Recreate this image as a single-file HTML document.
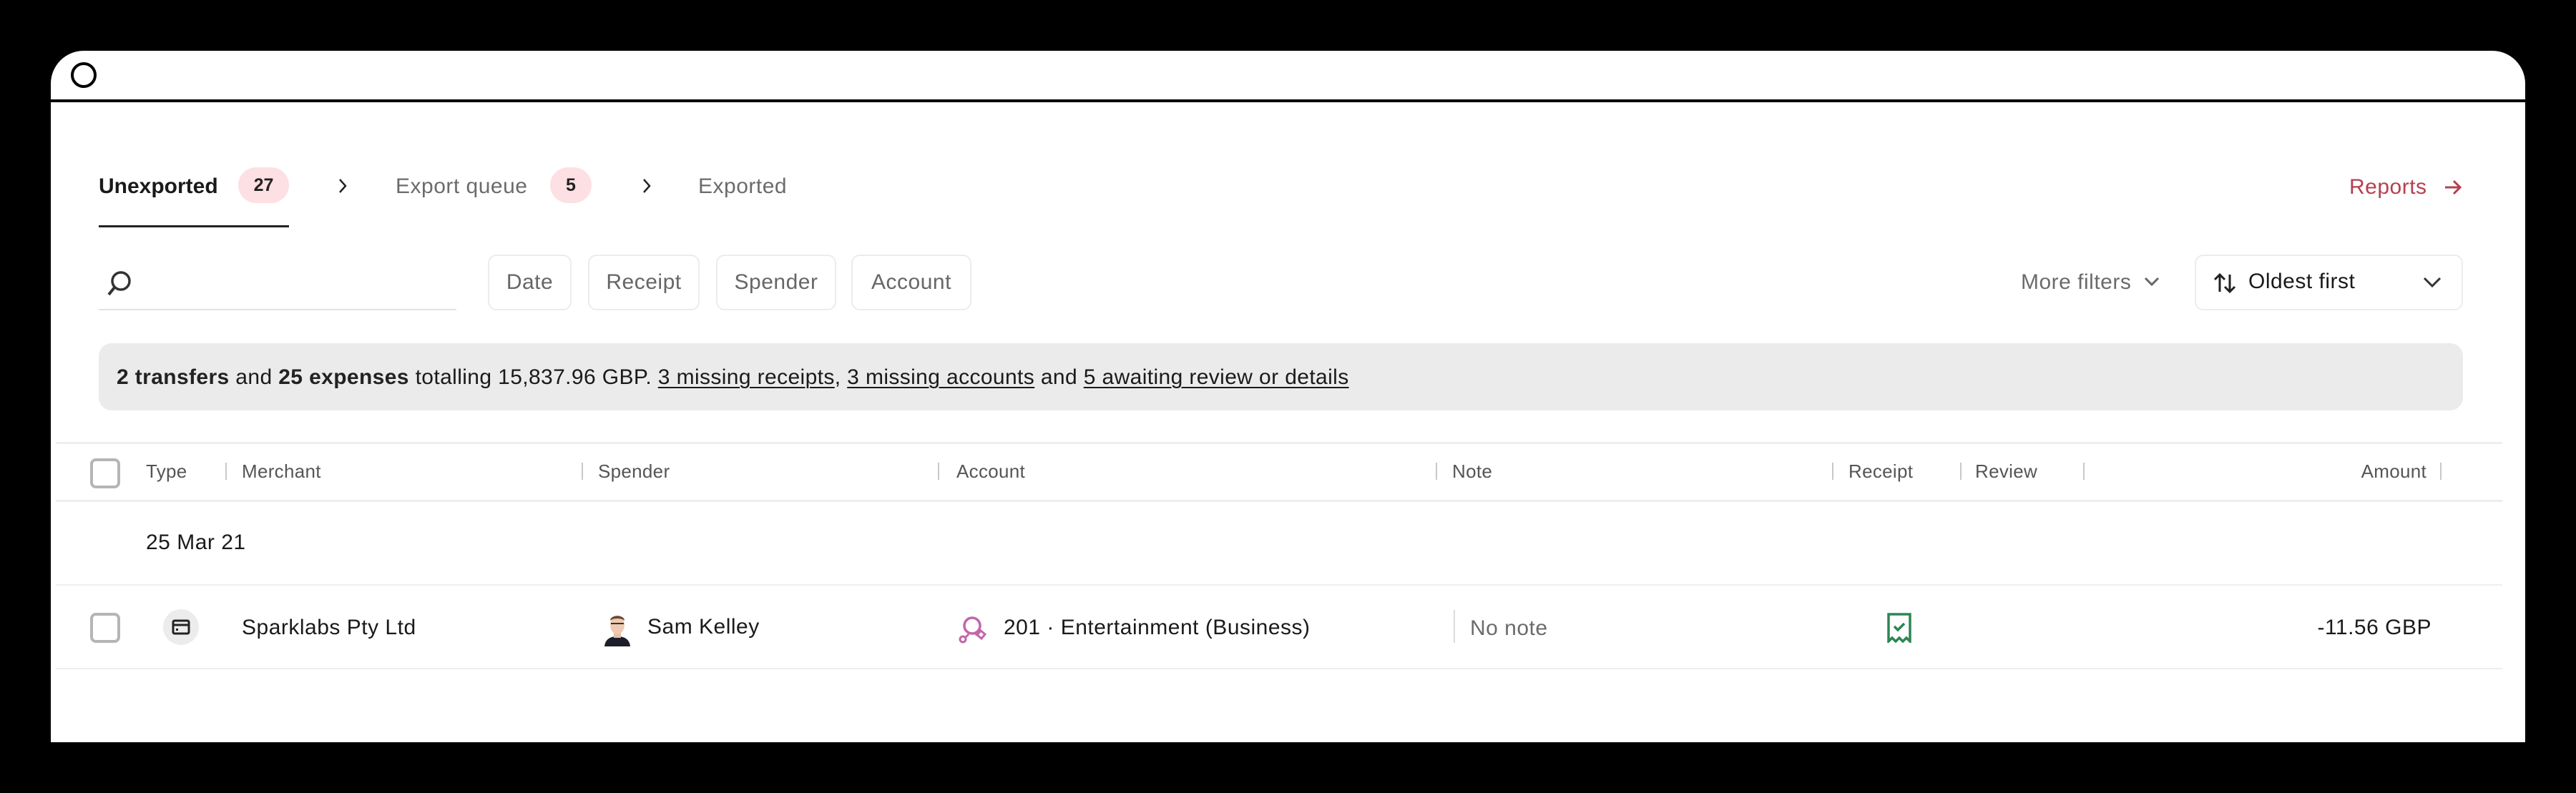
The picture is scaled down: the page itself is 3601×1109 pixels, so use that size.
<!DOCTYPE html>
<html><head><meta charset="utf-8"><style>
*{box-sizing:border-box;margin:0;padding:0}
body{width:3601px;height:1109px;background:#000;position:relative;overflow:hidden;font-family:"Liberation Sans",sans-serif;color:#1a1a1a}
.a{position:absolute;white-space:nowrap}
#panel{position:absolute;left:71px;top:71px;width:3459px;height:967px;background:#fff;border-radius:46px 46px 0 0;overflow:hidden}
.t30{font-size:30px;line-height:36px;letter-spacing:0.5px}
.g{color:#6b6b6b}
.badge{position:absolute;height:50px;border-radius:25px;background:#fde0e3;font-size:25px;line-height:50px;text-align:center;font-weight:bold;color:#222}
.fb{position:absolute;top:285px;height:78px;border:2px solid #ececec;border-radius:12px;font-size:30px;line-height:74px;text-align:center;color:#666;letter-spacing:0.5px}
.h{position:absolute;top:573px;font-size:26px;line-height:30px;color:#555;letter-spacing:0.3px}
.sep{position:absolute;top:576px;width:2px;height:24px;background:#c8c8c8}
.line{position:absolute;left:7px;width:3420px;height:3px;background:#eeeeee}
.cb{position:absolute;left:55px;width:42px;height:42px;border:4px solid #b5b5b5;border-radius:8px}
u{text-decoration:underline;text-underline-offset:4px;text-decoration-thickness:2px}
b{font-weight:bold;color:#222}
</style></head><body>
<div id="panel">
  <div class="a" style="left:28px;top:16px;width:36px;height:36px;border:4px solid #000;border-radius:50%"></div>
  <div class="a" style="left:0;top:68px;width:3459px;height:4px;background:#000"></div>

  <div class="a t30" style="left:67px;top:172px;font-weight:bold;letter-spacing:0">Unexported</div>
  <div class="badge" style="left:262px;top:163px;width:71px">27</div>
  <div class="a" style="left:67px;top:244px;width:266px;height:3px;background:#222"></div>
  <svg class="a" style="left:398px;top:176px" width="20" height="26" viewBox="0 0 20 26"><path d="M6 4l8 9-8 9" fill="none" stroke="#222" stroke-width="2.5"/></svg>
  <div class="a t30 g" style="left:482px;top:172px">Export queue</div>
  <div class="badge" style="left:698px;top:163px;width:58px">5</div>
  <svg class="a" style="left:823px;top:176px" width="20" height="26" viewBox="0 0 20 26"><path d="M6 4l8 9-8 9" fill="none" stroke="#222" stroke-width="2.5"/></svg>
  <div class="a t30 g" style="left:905px;top:172px">Exported</div>

  <div class="a t30" style="left:3213px;top:173px;color:#b5404f">Reports</div>
  <svg class="a" style="left:3343px;top:176px" width="30" height="30" viewBox="0 0 30 30"><path d="M4 15h21M16 6l9 9-9 9" fill="none" stroke="#b5404f" stroke-width="3"/></svg>

  <svg class="a" style="left:76px;top:304px" width="40" height="44" viewBox="0 0 40 44"><circle cx="22" cy="18" r="12" fill="none" stroke="#333" stroke-width="3.5"/><path d="M13 27L5 37" stroke="#333" stroke-width="4"/></svg>
  <div class="a" style="left:67px;top:361px;width:500px;height:2px;background:#e2e2e2"></div>
  <div class="fb" style="left:611px;width:117px">Date</div>
  <div class="fb" style="left:751px;width:156px">Receipt</div>
  <div class="fb" style="left:930px;width:168px">Spender</div>
  <div class="fb" style="left:1119px;width:168px">Account</div>

  <div class="a t30 g" style="left:2754px;top:306px">More filters</div>
  <svg class="a" style="left:2925px;top:313px" width="24" height="20" viewBox="0 0 24 20"><path d="M3 5l9 9 9-9" fill="none" stroke="#666" stroke-width="3"/></svg>
  <div class="a" style="left:2997px;top:285px;width:375px;height:78px;border:2px solid #ececec;border-radius:12px"></div>
  <svg class="a" style="left:3022px;top:307px" width="36" height="36" viewBox="0 0 36 36"><path d="M10 30V6M3 13l7-7 7 7M24 6v24M17 23l7 7 7-7" fill="none" stroke="#222" stroke-width="3"/></svg>
  <div class="a t30" style="left:3072px;top:305px">Oldest first</div>
  <svg class="a" style="left:3315px;top:313px" width="28" height="22" viewBox="0 0 28 22"><path d="M3 5l11 11 11-11" fill="none" stroke="#333" stroke-width="3"/></svg>

  <div class="a" style="left:67px;top:409px;width:3305px;height:94px;background:#ebebeb;border-radius:18px"></div>
  <div class="a t30" style="left:92px;top:439px;letter-spacing:0.38px"><b>2 transfers</b> and <b>25 expenses</b> totalling 15,837.96 GBP. <u>3 missing receipts</u>, <u>3 missing accounts</u> and <u>5 awaiting review or details</u></div>

  <div class="line" style="top:547px"></div>
  <div class="cb" style="top:570px"></div>
  <div class="h" style="left:133px">Type</div>
  <div class="sep" style="left:244px"></div><div class="h" style="left:267px">Merchant</div>
  <div class="sep" style="left:742px"></div><div class="h" style="left:765px">Spender</div>
  <div class="sep" style="left:1240px"></div><div class="h" style="left:1266px">Account</div>
  <div class="sep" style="left:1936px"></div><div class="h" style="left:1959px">Note</div>
  <div class="sep" style="left:2490px"></div><div class="h" style="left:2513px">Receipt</div>
  <div class="sep" style="left:2669px"></div><div class="h" style="left:2690px">Review</div>
  <div class="sep" style="left:2841px"></div>
  <div class="h" style="left:3221px;width:100px;text-align:right">Amount</div>
  <div class="sep" style="left:3340px"></div>
  <div class="line" style="top:628px"></div>

  <div class="a t30" style="left:133px;top:670px">25 Mar 21</div>
  <div class="line" style="top:746px;height:2px"></div>

  <div class="cb" style="top:786px"></div>
  <div class="a" style="left:157px;top:781px;width:50px;height:50px;border-radius:50%;background:#ececec"></div>
  <svg class="a" style="left:168px;top:794px" width="28" height="24" viewBox="0 0 28 24"><rect x="3" y="3" width="22" height="18" rx="2" fill="none" stroke="#222" stroke-width="3"/><path d="M3 9h22" stroke="#222" stroke-width="3"/><rect x="7" y="14" width="3" height="3" fill="#222"/></svg>
  <div class="a t30" style="left:267px;top:789px">Sparklabs Pty Ltd</div>
  <svg class="a" style="left:770px;top:783px" width="44" height="50" viewBox="0 0 44 50"><path d="M4 50c1-10 8-14 18-14s17 4 18 14z" fill="#1c1f2a"/><rect x="17" y="30" width="10" height="8" fill="#e8c0a8"/><ellipse cx="22" cy="20" rx="10" ry="13" fill="#efcab2"/><path d="M12 14c0-9 20-9 20 0-4-4-16-4-20 0z" fill="#6b4a33"/><path d="M13 18h18" stroke="#333" stroke-width="2"/></svg>
  <div class="a t30" style="left:834px;top:788px">Sam Kelley</div>
  <svg class="a" style="left:1268px;top:787px" width="44" height="44" viewBox="0 0 44 44"><circle cx="20" cy="17" r="11" fill="none" stroke="#c266a8" stroke-width="3.5"/><circle cx="7" cy="36" r="4" fill="none" stroke="#c266a8" stroke-width="3"/><path d="M32 24l6 5-5 6-6-5z" fill="none" stroke="#c266a8" stroke-width="3"/><path d="M11 33l4-4M27 30l-4-3" stroke="#c266a8" stroke-width="3"/></svg>
  <div class="a t30" style="left:1332px;top:789px">201 · Entertainment (Business)</div>
  <div class="a" style="left:1961px;top:782px;width:2px;height:46px;background:#dcdcdc"></div>
  <div class="a t30 g" style="left:1984px;top:790px">No note</div>
  <svg class="a" style="left:2567px;top:786px" width="34" height="42" viewBox="0 0 34 42"><path d="M2 2h30v38l-5-5-5 5-5-5-5 5-5-5-5 5z" fill="none" stroke="#2e8555" stroke-width="3.5"/><path d="M10 19l5 5 9-9" fill="none" stroke="#2e8555" stroke-width="3.5"/></svg>
  <div class="a t30" style="left:3128px;top:789px;width:200px;text-align:right">-11.56 GBP</div>
  <div class="line" style="top:863px;height:2px"></div>
</div>
</body></html>
